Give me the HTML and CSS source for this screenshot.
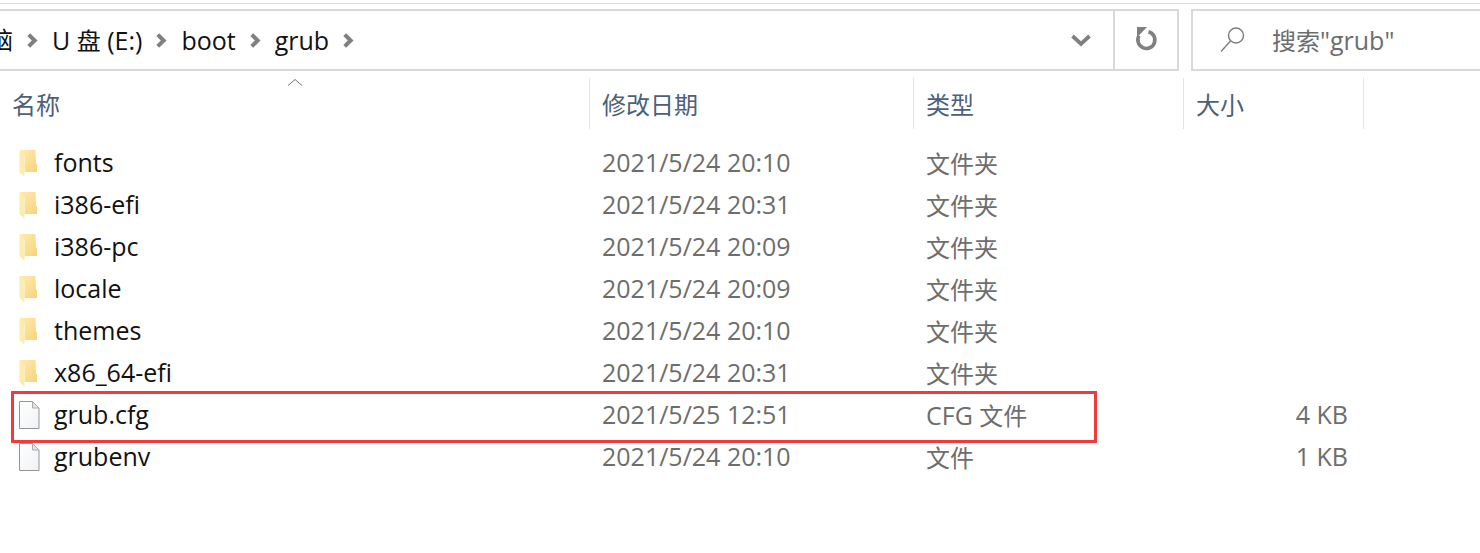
FILE: index.html
```html
<!DOCTYPE html>
<html lang="en">
<head>
  <meta charset="UTF-8" />
  <meta name="viewport" content="width=device-width, initial-scale=1.0" />
  <title>grub</title>
  <link rel="stylesheet" href="styles.css">
</head>
<body>
  <div class="window">
    <div class="top-line"></div>

    <div class="toolbar">
      <div class="address-bar">
        <div class="crumbs">
          <span class="crumb cjk">脑</span>
          <svg class="chev" viewBox="0 0 12 14"><path d="M2.5 1.5L8 7l-5.5 5.5"/></svg>
          <span class="crumb">U <span class="cjk">盘</span> (E:)</span>
          <svg class="chev" viewBox="0 0 12 14"><path d="M2.5 1.5L8 7l-5.5 5.5"/></svg>
          <span class="crumb">boot</span>
          <svg class="chev" viewBox="0 0 12 14"><path d="M2.5 1.5L8 7l-5.5 5.5"/></svg>
          <span class="crumb">grub</span>
          <svg class="chev" viewBox="0 0 12 14"><path d="M2.5 1.5L8 7l-5.5 5.5"/></svg>
        </div>
        <div class="drop-btn">
          <svg class="drop-icon" viewBox="0 0 20 13"><path d="M1.5 2l8.5 8 8.5-8"/></svg>
        </div>
        <div class="refresh-btn">
          <svg class="refresh-icon" viewBox="0 0 24 26">
            <path class="arc" d="M14.5 4.700a8.500 8.500 0 1 1-9.500 4"/>
            <path class="tip" d="M3 0h10L3 10.500z"/>
          </svg>
        </div>
      </div>
      <div class="search-box">
        <svg class="search-icon" viewBox="0 0 26 26">
          <circle cx="16" cy="8.500" r="7.500"/>
          <path d="M10.500 14L1 24.500"/>
        </svg>
        <span class="search-text"><span class="cjk">搜索</span>"grub"</span>
      </div>
    </div>

    <div class="list">
      <svg class="sort-arrow" viewBox="0 0 16 8"><path d="M1 7.500l7-6 7 6"/></svg>

      <div class="head">
        <div class="head-cell">名称</div>
        <div class="head-cell">修改日期</div>
        <div class="head-cell">类型</div>
        <div class="head-cell">大小</div>
      </div>

      <div class="rows">
        <div class="row">
          <div class="name"><svg class="folder" viewBox="0 0 20 27"><use href="#folder-icon"/></svg>fonts</div>
          <div class="cell">2021/5/24 20:10</div><div class="cell cjk">文件夹</div><div class="cell size"></div>
        </div>
        <div class="row">
          <div class="name"><svg class="folder" viewBox="0 0 20 27"><use href="#folder-icon"/></svg>i386-efi</div>
          <div class="cell">2021/5/24 20:31</div><div class="cell cjk">文件夹</div><div class="cell size"></div>
        </div>
        <div class="row">
          <div class="name"><svg class="folder" viewBox="0 0 20 27"><use href="#folder-icon"/></svg>i386-pc</div>
          <div class="cell">2021/5/24 20:09</div><div class="cell cjk">文件夹</div><div class="cell size"></div>
        </div>
        <div class="row">
          <div class="name"><svg class="folder" viewBox="0 0 20 27"><use href="#folder-icon"/></svg>locale</div>
          <div class="cell">2021/5/24 20:09</div><div class="cell cjk">文件夹</div><div class="cell size"></div>
        </div>
        <div class="row">
          <div class="name"><svg class="folder" viewBox="0 0 20 27"><use href="#folder-icon"/></svg>themes</div>
          <div class="cell">2021/5/24 20:10</div><div class="cell cjk">文件夹</div><div class="cell size"></div>
        </div>
        <div class="row">
          <div class="name"><svg class="folder" viewBox="0 0 20 27"><use href="#folder-icon"/></svg>x86_64-efi</div>
          <div class="cell">2021/5/24 20:31</div><div class="cell cjk">文件夹</div><div class="cell size"></div>
        </div>
        <div class="row">
          <div class="name"><svg class="file" viewBox="0 0 22 28"><use href="#file-icon"/></svg>grub.cfg</div>
          <div class="cell">2021/5/25 12:51</div><div class="cell">CFG <span class="cjk">文件</span></div><div class="cell size">4 KB</div>
        </div>
        <div class="row">
          <div class="name"><svg class="file" viewBox="0 0 22 28"><use href="#file-icon"/></svg>grubenv</div>
          <div class="cell">2021/5/24 20:10</div><div class="cell cjk">文件</div><div class="cell size">1 KB</div>
        </div>
        <div class="highlight"></div>
      </div>
    </div>
  </div>

  <svg class="defs" width="0" height="0">
    <defs>
      <linearGradient id="folder-fill" x1="0" y1="0" x2="1" y2="1">
        <stop offset="0" stop-color="#ffeab0"/>
        <stop offset="1" stop-color="#f7d47c"/>
      </linearGradient>
      <linearGradient id="file-fill" x1="0" y1="0" x2="1" y2="1">
        <stop offset="0" stop-color="#ffffff"/>
        <stop offset="1" stop-color="#eff2f5"/>
      </linearGradient>
      <symbol id="folder-icon" viewBox="0 0 20 27">
        <path d="M1.500 0H17.500L18 14h1v8H6.500V6z" fill="url(#folder-fill)"/>
        <path d="M1.500 0l5 5v22l-5-5z" fill="#fdecb0"/>
      </symbol>
      <symbol id="file-icon" viewBox="0 0 22 28">
        <path d="M1.500 0.500h13l6.500 6.500v20.500H1.500z" fill="url(#file-fill)" stroke="#959595"/>
        <path d="M14.500 0.500v6.500h6.500z" fill="#e4e4e4" stroke="#aaaaaa"/>
      </symbol>
    </defs>
  </svg>
</body>
</html>
```

FILE: styles.css
```css
* {
  box-sizing: border-box;
}

html,
body {
  margin: 0;
  height: 553px;
  overflow: hidden;
  background: #fff;
}

body {
  font-family: "Open Sans", "Noto Sans CJK SC", sans-serif;
  font-size: 25px;
}

.cjk {
  font-size: 24px;
}

.defs {
  position: absolute;
}

.window {
  height: 100%;
  padding-top: 3px;
}

.top-line {
  height: 1px;
  background: #dcdcdc;
}

.toolbar {
  display: flex;
  height: 62px;
  margin-top: 5px;
}

.address-bar {
  display: flex;
  width: 1179px;
  border: 2px solid #d9d9d9;
  border-left: none;
}

.crumbs {
  flex: 1;
  display: flex;
  align-items: center;
  overflow: hidden;
  color: #111;
  margin-left: -11px;
}

.crumb {
  line-height: 30px;
  white-space: nowrap;
}

.chev {
  flex: none;
  width: 13px;
  height: 15px;
  margin: 0 13px;
  fill: none;
  stroke: #808080;
  stroke-width: 3.8;
}

.drop-btn,
.refresh-btn {
  display: flex;
  align-items: center;
  justify-content: center;
}

.drop-btn {
  width: 66px;
  padding-left: 2px;
}

.drop-icon {
  width: 20px;
  height: 13px;
  fill: none;
  stroke: #808080;
  stroke-width: 3.8;
}

.refresh-btn {
  width: 64px;
  border-left: 2px solid #d9d9d9;
}

.refresh-icon {
  width: 24px;
  height: 26px;
}

.arc {
  fill: none;
  stroke: #808080;
  stroke-width: 3.6;
}

.tip {
  fill: #808080;
}

.search-box {
  flex: 1;
  display: flex;
  align-items: center;
  margin-left: 12px;
  padding-left: 27px;
  border: 2px solid #d9d9d9;
  border-right: none;
  color: #6d6d6d;
}

.search-icon {
  width: 26px;
  height: 26px;
  fill: none;
  stroke: #7d7d7d;
  stroke-width: 1.4;
}

.search-text {
  margin-left: 26px;
  padding-bottom: 2px;
}

.list {
  position: relative;
  padding-top: 7px;
}

.sort-arrow {
  position: absolute;
  left: 287px;
  top: 7px;
  width: 16px;
  height: 8px;
  fill: none;
  stroke: #707070;
  stroke-width: 1;
}

.head {
  display: grid;
  grid-template-columns: 590px 324px 270px 180px;
  height: 51px;
  color: #4c607a;
  font-size: 24px;
}

.head-cell {
  display: flex;
  align-items: center;
  padding-left: 12px;
  padding-bottom: 1px;
  border-right: 1px solid #e5e5e5;
}

.rows {
  position: relative;
  padding-top: 12px;
}

.row {
  display: grid;
  grid-template-columns: 590px 324px 258px 180px;
  height: 42px;
  align-items: center;
  white-space: nowrap;
}

.name {
  display: flex;
  align-items: center;
  padding-left: 18px;
  color: #111;
}

.folder {
  width: 20px;
  height: 27px;
  margin-top: 2px;
  margin-right: 16px;
}

.file {
  width: 22px;
  height: 28px;
  margin-top: 2px;
  margin-right: 14px;
}

.cell {
  padding-left: 12px;
  color: #6d6d6d;
}

.size {
  text-align: right;
  padding-right: 4px;
}

.highlight {
  position: absolute;
  left: 11px;
  top: 262px;
  width: 1086px;
  height: 52px;
  border: 3px solid #ef3b3b;
}
```
